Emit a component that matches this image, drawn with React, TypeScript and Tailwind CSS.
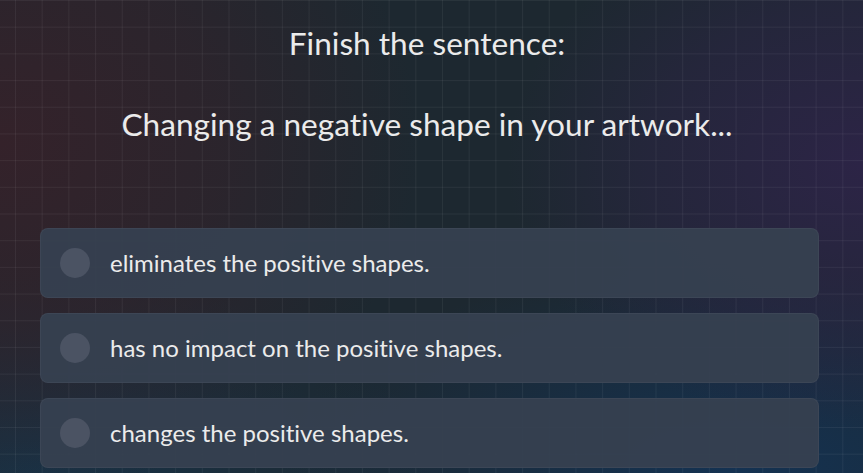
import React from "react";

const options = [
  "eliminates the positive shapes.",
  "has no impact on the positive shapes.",
  "changes the positive shapes.",
];

export default function App() {
  return (
    <div
      className="relative w-[863px] h-[473px] overflow-hidden bg-[#1d2830] text-[#ebebeb] [font-variant-ligatures:none]"
      style={{ fontFamily: "Lato, 'Noto Sans', sans-serif" }}
    >
      <div className="absolute inset-0 bg-[radial-gradient(ellipse_65%_100%_at_0%_30%,rgba(52,34,42,1),rgba(52,34,42,0.6)_40%,transparent_75%),radial-gradient(ellipse_55%_75%_at_100%_35%,rgba(44,36,70,1),rgba(44,36,70,0.5)_45%,transparent_75%),radial-gradient(ellipse_70%_60%_at_85%_100%,rgba(20,50,82,1),transparent_75%),radial-gradient(ellipse_60%_55%_at_5%_100%,rgba(24,50,70,1),transparent_75%)]" />
      <div className="absolute inset-0 bg-[linear-gradient(to_right,rgba(255,255,255,0.055)_1px,transparent_1px),linear-gradient(to_bottom,rgba(255,255,255,0.055)_1px,transparent_1px)] bg-[size:26.7px_26.7px] bg-[position:15px_0px]" />
      <div className="relative flex flex-col items-center">
        <h1 className="mt-[23px] mr-[9px] text-[31.6px] leading-[40px] font-normal">Finish the sentence:</h1>
        <p className="mt-[41px] mr-[9px] text-[31.6px] leading-[40px]">Changing a negative shape in your artwork...</p>
        <div className="mt-[84px] w-[779px] ml-[-4px] flex flex-col gap-[15px]">
          {options.map((o) => (
            <div
              key={o}
              className="h-[70px] shrink-0 rounded-[8px] bg-[#364050]/95 border border-white/[0.04] flex items-center pl-[19px] gap-[20px]"
            >
              <div className="w-[30px] h-[30px] rounded-full bg-[#4b5363]" />
              <span className="text-[24px] leading-[30px]">{o}</span>
            </div>
          ))}
        </div>
      </div>
    </div>
  );
}
